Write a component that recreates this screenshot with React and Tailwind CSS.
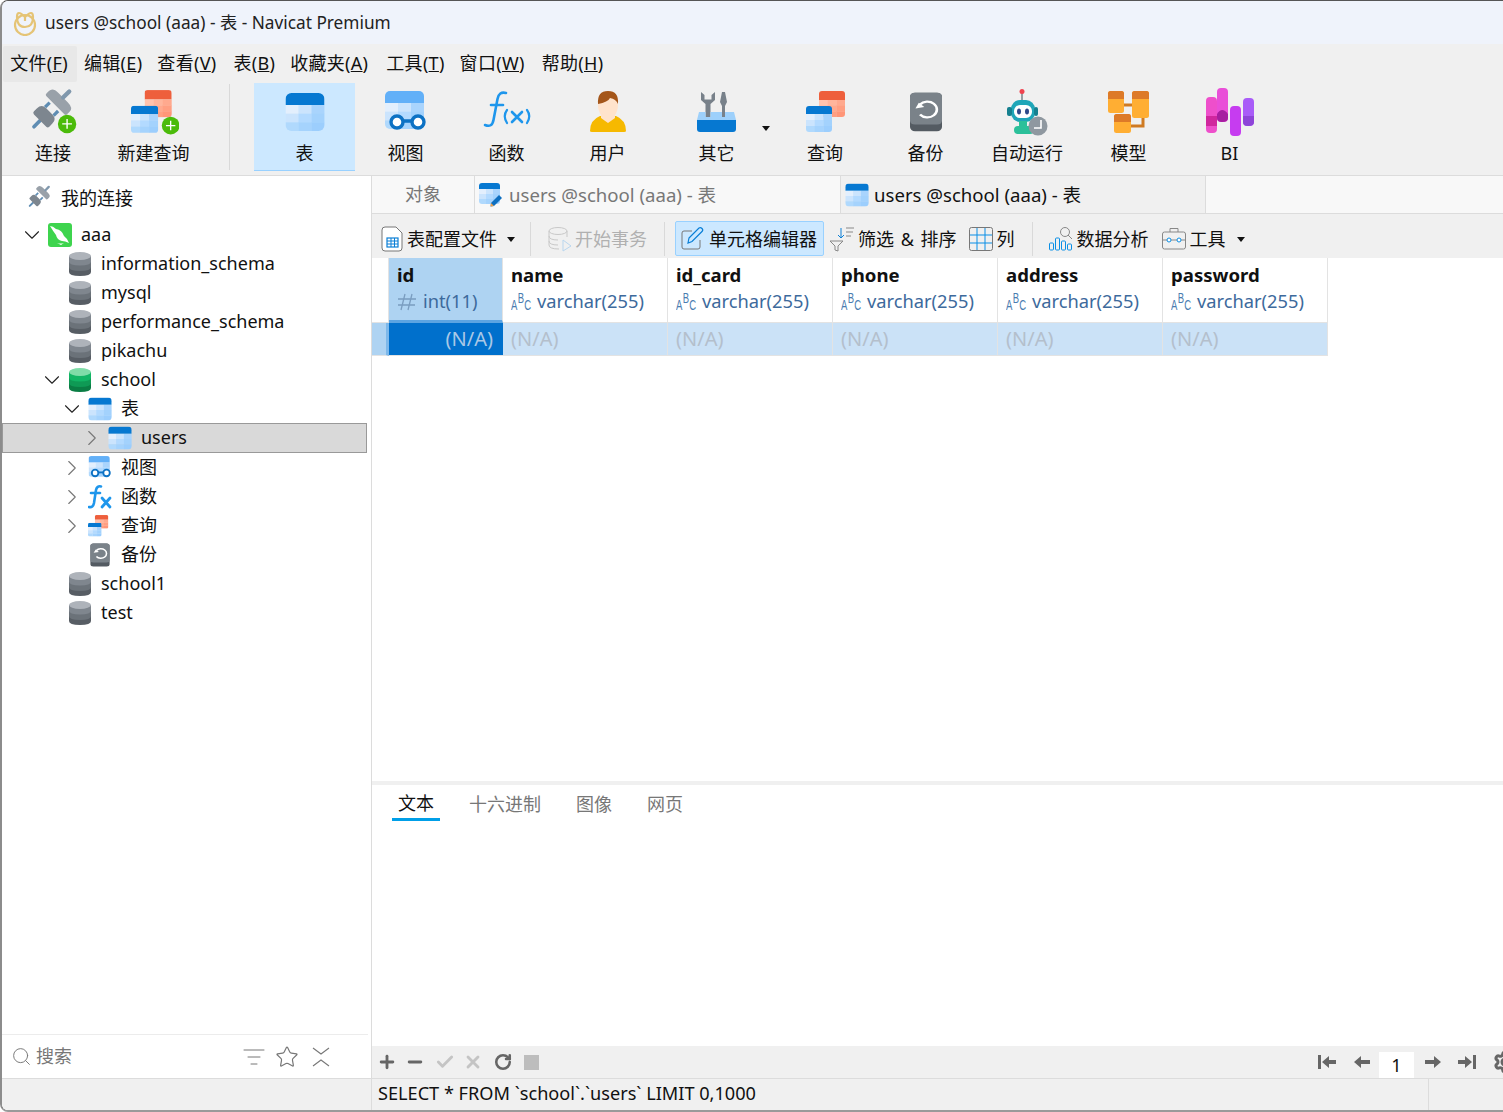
import { useId } from "react";
import { ChevronDown, ChevronRight, Search, Star, Plus, Minus, Check, X, RotateCw, Settings, ListFilter } from "lucide-react";

const font = "font-['Noto_Sans','Noto_Sans_CJK_SC',sans-serif]";

const BLUE_CELLS = ["#e3effd", "#cbe4fd", "#a9d4fd", "#cbe4fd", "#b3daff", "#a3d2fd", "#b0d9fd", "#a5d3fd", "#9ccefd"];
const RED_CELLS = ["#ffc3ae", "#ffb59c", "#ffa98e", "#ffb59c", "#ffa98e", "#ff9f82", "#ffa98e", "#ff9f82", "#ff9678"];

function Sheet({ x, y, w, h, head, headH, cells = BLUE_CELLS, rx = 4 }) {
  const id = useId();
  const bodyH = h - headH;
  return (
    <g>
      <clipPath id={id}><rect x={x} y={y} width={w} height={h} rx={rx} /></clipPath>
      <g clipPath={`url(#${id})`}>
        <rect x={x} y={y} width={w} height={headH} fill={head} />
        {cells.map((c, i) => (
          <rect key={i} x={x + (i % 3) * (w / 3)} y={y + headH + Math.floor(i / 3) * (bodyH / 3)} width={w / 3 + 0.3} height={bodyH / 3 + 0.3} fill={c} />
        ))}
      </g>
    </g>
  );
}

function TableIcon({ size = 40, className = "" }) {
  return (
    <svg width={size} height={size} viewBox="0 0 40 40" className={className}>
      <Sheet x={0.5} y={1} w={39} h={38} head="#0678d1" headH={12} rx={6} />
    </svg>
  );
}

function EditTableIcon() {
  return (
    <svg width="24" height="24" viewBox="0 0 24 24">
      <Sheet x={0} y={0} w={21} h={21} head="#0678d1" headH={6} rx={3} />
      <path d="M12 20 L20 12 L23 15 L15 23 L11.5 23.5 Z" fill="#0d6fc0" />
      <path d="M11.5 23.5 L12 20 L15 23 Z" fill="#f0a04b" />
    </svg>
  );
}

function ViewIcon({ size = 44 }) {
  return (
    <svg width={size} height={size} viewBox="0 0 44 44">
      <Sheet x={1} y={1} w={39} h={38} head="#62b0f8" headH={12} rx={5} />
      <circle cx="13" cy="32" r="6" fill="#fff" stroke="#0d72c4" strokeWidth="3.4" />
      <circle cx="34" cy="32" r="6" fill="#fff" stroke="#0d72c4" strokeWidth="3.4" />
      <path d="M19 31 H28" stroke="#0d72c4" strokeWidth="3.4" />
    </svg>
  );
}

function QueryIcon({ size = 40, plus = false, className = "" }) {
  return (
    <svg width={size} height={size} viewBox="0 0 46 44" className={className}>
      <Sheet x={13} y={1} w={26} h={26} head="#ee5f3c" headH={9} cells={RED_CELLS} rx={3} />
      <Sheet x={0} y={16} w={26} h={26} head="#0678d1" headH={8} rx={3} />
      {plus && <GreenPlus cx={38} cy={35} />}
    </svg>
  );
}

function GreenPlus({ cx, cy }) {
  return (
    <g>
      <circle cx={cx} cy={cy} r="8.5" fill="#4bbb0a" />
      <path d={`M${cx - 4.5} ${cy} H${cx + 4.5} M${cx} ${cy - 4.5} V${cy + 4.5}`} stroke="#fff" strokeWidth="1.3" />
    </g>
  );
}

function PlugIcon({ size = 48, plus = false }) {
  return (
    <svg width={size} height={size} viewBox="0 0 48 48">
      <g transform="rotate(-45 22 22)">
        <path d="M0 22 H8" stroke="#5f8db3" strokeWidth="3.4" strokeLinecap="round" />
        <path d="M8 14 Q8 12 10 12 H14 Q20 12 20 18 V26 Q20 32 14 32 H10 Q8 32 8 30 Z" fill="#7d868f" />
        <path d="M20 16.5 H26 M20 27.5 H26" stroke="#5f8db3" strokeWidth="3" />
        <path d="M28 10 Q28 8.5 30 8.5 H33 Q38 8.5 38 16 V28 Q38 35.5 33 35.5 H30 Q28 35.5 28 34 Z" fill="#99a1a9" />
        <path d="M38 22 H46" stroke="#8098ad" strokeWidth="4" strokeLinecap="round" />
      </g>
      {plus && <GreenPlus cx={37} cy={35} />}
    </svg>
  );
}

function FuncIcon() {
  return (
    <svg width="48" height="44" viewBox="0 0 48 44" fill="none" stroke="#1e96ec" strokeLinecap="round">
      <path d="M23 3 Q16 1 14.5 9 L10.5 30 Q9 38 2 35" strokeWidth="2.6" />
      <path d="M8 15 H20" strokeWidth="2.6" />
      <path d="M24 20 Q19.5 26 24 33 M44 20 Q48.5 26 44 33" strokeWidth="2.2" />
      <path d="M29 22 L39 32 M39 22 L29 32" strokeWidth="2.6" />
    </svg>
  );
}

function SmallFuncIcon() {
  return (
    <svg width="24" height="24" viewBox="0 0 24 24" fill="none" stroke="#1e96ec" strokeLinecap="round">
      <path d="M13 1.5 Q9 0.5 8 5 L6 18 Q5 23 1 22" strokeWidth="2.6" />
      <path d="M3 8 H12" strokeWidth="2.6" />
      <path d="M14 13 L22 22 M22 13 L14 22" strokeWidth="2.8" />
    </svg>
  );
}

function UserIcon() {
  return (
    <svg width="40" height="44" viewBox="0 0 40 44">
      <path d="M2 41 Q2 30 12 26 L28 26 Q38 30 38 41 Q38 42 36 42 H4 Q2 42 2 41Z" fill="#f6b900" />
      <path d="M13 22 H27 V28 L20 33 L13 28Z" fill="#ffe3cc" />
      <ellipse cx="20" cy="15" rx="10" ry="14" fill="#ffe3cc" />
      <path d="M10 14 Q9 1 20 1 Q31 1 30 14 Q28 9 22 8 Q20 12 10 14Z" fill="#a4561a" />
    </svg>
  );
}

function ToolsIcon() {
  return (
    <svg width="41" height="44" viewBox="0 0 41 44">
      <path d="M5 2 V10 L9.5 14 V30 H14.5 V14 L19 10 V2 L15.5 5 V9.5 H8.5 V5Z" fill="#78818a" />
      <path d="M26 2 H29 L31 12 L29 16 V30 H26 V16 L24 12Z" fill="#78818a" />
      <path d="M3 22 H9.5 V27 H14.5 V22 H26 V27 H29 V22 H38 L40 30 H1Z" fill="#9dd0fb" />
      <path d="M1 30 H40 V39 Q40 42 37 42 H4 Q1 42 1 39Z" fill="#0678d1" />
    </svg>
  );
}

function BackupIcon({ size = 40 }) {
  return (
    <svg width={size} height={size} viewBox="0 0 40 48" preserveAspectRatio="none">
      <rect x="4" y="1" width="32" height="46" rx="5" fill="#545b62" />
      <path d="M4 6 Q4 1 9 1 H31 Q36 1 36 6 V34 Q36 39 31 39 H9 Q4 39 4 34Z" fill="#7a8289" />
      <path d="M14 15 A9.5 9.5 0 1 1 14 27" fill="none" stroke="#fff" strokeWidth="2.6" />
      <path d="M9 19 H18 L13.5 13Z" transform="rotate(-10 13 17)" fill="#fff" />
    </svg>
  );
}

function RobotIcon() {
  return (
    <svg width="44" height="48" viewBox="0 0 44 48">
      <path d="M17 5 V12" stroke="#7f8990" strokeWidth="1.6" />
      <circle cx="17" cy="3.5" r="2.5" fill="#f0434f" />
      <rect x="6" y="12" width="24" height="22" rx="9" fill="#1fa6b8" />
      <rect x="2" y="19" width="5" height="9" rx="2" fill="#15808f" />
      <rect x="29" y="19" width="4" height="9" rx="2" fill="#15808f" />
      <rect x="9" y="17" width="18" height="13" rx="6" fill="#fff" />
      <ellipse cx="14" cy="23.5" rx="2" ry="3" fill="#2e4a8a" />
      <ellipse cx="22" cy="23.5" rx="2" ry="3" fill="#2e4a8a" />
      <rect x="14" y="33" width="8" height="5" fill="#2cc09a" />
      <rect x="9" y="38" width="20" height="8" rx="4" fill="#2cc09a" />
      <ellipse cx="33" cy="38" rx="9.5" ry="9.5" fill="#8f98a0" />
      <path d="M36 32 V40 H29" fill="none" stroke="#fff" strokeWidth="1.6" />
    </svg>
  );
}

function ModelIcon() {
  return (
    <svg width="44" height="44" viewBox="0 0 44 44">
      <path d="M14 15 H28 M36 28 V36 H24" fill="none" stroke="#cf7a22" strokeWidth="3" />
      {[[1, 1, 16, 22], [25, 1, 17, 27], [7, 24, 17, 19]].map(([x, y, w, h]) => (
        <g key={x}>
          <rect x={x} y={y} width={w} height={h} rx="2.5" fill="#ffae33" />
          <path d={`M${x} ${y + 8} V${y + 2.5} Q${x} ${y} ${x + 2.5} ${y} H${x + w - 2.5} Q${x + w} ${y} ${x + w} ${y + 2.5} V${y + 8}Z`} fill="#dd7a28" />
        </g>
      ))}
    </svg>
  );
}

function BiIcon() {
  return (
    <svg width="48" height="48" viewBox="0 0 48 48">
      <rect x="0" y="12" width="11" height="36" rx="4" transform="translate(0 -3)" fill="#ee4fcb" />
      <rect x="0" y="28" width="11" height="10" fill="#d0279e" />
      <rect x="11" y="0" width="11" height="34" rx="4" fill="#e94fd8" />
      <path d="M11 26 Q16 18 22 26 V30 Q22 34 16 34 Q11 34 11 30Z" fill="#a61ea0" />
      <rect x="24" y="18" width="11" height="30" rx="4" fill="#c63cf0" />
      <rect x="37" y="10" width="11" height="28" rx="4" fill="#a95cf8" />
      <path d="M37 28 H48 V34 Q48 38 42 38 Q37 38 37 34Z" fill="#8e45d8" />
    </svg>
  );
}

function DbIcon({ green = false }) {
  const c = green
    ? ["#7fdca8", "#12b565", "#0f9a55", "#0a7d44"]
    : ["#aeb3ba", "#7f868e", "#6b7279", "#575d64"];
  return (
    <svg width="22" height="24" viewBox="0 0 22 24">
      <path d="M0 4 V20 Q0 24 11 24 Q22 24 22 20 V4Z" fill={c[3]} />
      <path d="M0 4 V15 Q0 19 11 19 Q22 19 22 15 V4Z" fill={c[2]} />
      <path d="M0 4 V9.5 Q0 13.5 11 13.5 Q22 13.5 22 9.5 V4Z" fill={c[1]} />
      <ellipse cx="11" cy="4" rx="11" ry="4" fill={c[0]} />
    </svg>
  );
}

function ConnIcon() {
  return (
    <svg width="24" height="24" viewBox="0 0 24 24">
      <rect width="24" height="24" rx="3" fill="#3ed44e" />
      <path d="M2 3 Q5 3 8 6 Q14 7 16 13 Q19 15 21 20 Q17 18 14 18 Q9 17 8 12 Q5 8 2 3Z" fill="#fff" />
      <path d="M9 20 Q13 21 16 20 L13 22Z" fill="#fff" />
    </svg>
  );
}

function TypeAbc() {
  return (
    <svg width="22" height="26" viewBox="0 0 22 26" fill="#4a7cb0" className="shrink-0" fontFamily="Liberation Sans" fontSize="14">
      <g transform="scale(0.68 1)">
        <text x="0" y="22">A</text>
        <text x="10" y="15">B</text>
        <text x="19.5" y="22">C</text>
      </g>
    </svg>
  );
}

function ToolbarItem({ label, icon, active = false, w = "w-[101px]" }) {
  return (
    <div className={`${w} h-[88px] flex flex-col items-center shrink-0 ${active ? "bg-[#cce8ff] border-b border-[#99d1ff]" : ""}`}>
      <div className="h-[54px] mt-[2px] flex items-center justify-center">{icon}</div>
      <div className="text-[18px] leading-[24px] mt-[2px] text-[#111]">{label}</div>
    </div>
  );
}

function Sep({ className = "" }) {
  return <div className={`w-px bg-[#d9d9d9] shrink-0 ${className}`} />;
}

const rowIndent = { 0: "pl-[20px]", 1: "pl-[40px]", 2: "pl-[60px]", 3: "pl-[80px]" };

function TreeRow({ depth, arrow, icon, label, selected }) {
  return (
    <div className={`flex items-center ${rowIndent[depth]} ${selected ? "h-[30px] pb-px bg-[#d9d9d9] outline outline-1 -outline-offset-1 outline-[#999] mr-[4px]" : "h-[29px]"}`}>
      <div className="w-[20px] flex justify-center shrink-0">
        {arrow === "down" && <ChevronDown size={26} strokeWidth={1} color="#222" className="shrink-0" />}
        {arrow === "right" && <ChevronRight size={26} strokeWidth={1} color="#777" className="shrink-0" />}
      </div>
      <div className="w-[24px] ml-[6px] flex justify-center shrink-0">{icon}</div>
      <div className="ml-[9px] text-[18px] text-[#111] whitespace-nowrap">{label}</div>
    </div>
  );
}

const columns = [
  { name: "id", type: "int(11)" },
  { name: "name", type: "varchar(255)" },
  { name: "id_card", type: "varchar(255)" },
  { name: "phone", type: "varchar(255)" },
  { name: "address", type: "varchar(255)" },
  { name: "password", type: "varchar(255)" },
];

function NavIcon({ kind }) {
  const paths = {
    first: "M0 1 H3 V15 H0Z M18 6 H11 V2 L4 8 L11 14 V10 H18Z",
    prev: "M17 6 H8 V2 L1 8 L8 14 V10 H17Z",
    next: "M1 6 H10 V2 L17 8 L10 14 V10 H1Z",
    last: "M15 1 H18 V15 H15Z M0 6 H7 V2 L14 8 L7 14 V10 H0Z",
  };
  return (
    <svg width="18" height="16" viewBox="0 0 18 16" fill="#666">
      <path d={paths[kind]} />
    </svg>
  );
}

export default function App() {
  return (
    <div className={`${font} w-[1503px] h-[1112px] overflow-hidden bg-white flex flex-col`}>
      <div className="h-[1112px] flex flex-col border-l-2 border-[#8c8c8c] border-b-2 border-b-[#9a9a9a] border-t border-t-[#555] rounded-bl-[8px] rounded-tl-[8px] overflow-hidden">
        {/* title bar */}
        <div className="h-[43px] bg-[#eff3fb] flex items-center shrink-0 pl-[11px]">
          <svg width="24" height="26" viewBox="0 0 24 26" fill="none" stroke="#e5c476" strokeWidth="2.2">
            <circle cx="12" cy="15" r="10" />
            <path d="M12 7 Q4 -1 4 7 Q4 17 12 17 Q20 17 20 7 Q20 -1 12 7" />
            <path d="M12 7 V11" />
          </svg>
          <span className="ml-[8px] text-[17.25px] text-[#222]">users @school (aaa) - 表 - Navicat Premium</span>
        </div>

        {/* menu */}
        <div className="h-[39px] bg-[#f0f0f0] flex items-center shrink-0 text-[18px] text-[#111] tracking-[0.3px]">
          <div className="bg-[#e8e8e8] rounded-[2px] h-[36px] w-[74px] flex items-center justify-center ml-px pr-[2px]">
            <span>文件(<u>F</u>)</span>
          </div>
          <span className="ml-[7px]">编辑(<u>E</u>)</span>
          <span className="ml-[15px]">查看(<u>V</u>)</span>
          <span className="ml-[17px]">表(<u>B</u>)</span>
          <span className="ml-[15px]">收藏夹(<u>A</u>)</span>
          <span className="ml-[18px]">工具(<u>T</u>)</span>
          <span className="ml-[15px]">窗口(<u>W</u>)</span>
          <span className="ml-[17px]">帮助(<u>H</u>)</span>
        </div>

        {/* main toolbar */}
        <div className="h-[93px] bg-[#f0f0f0] border-b border-[#dcdcdc] flex shrink-0 items-start">
          <div className="ml-px flex">
            <ToolbarItem label="连接" icon={<PlugIcon size={52} plus />} w="w-[100px]" />
            <ToolbarItem label="新建查询" icon={<QueryIcon size={48} plus className="ml-[2px]" />} />
          </div>
          <Sep className="ml-[25px] mt-[1px] h-[86px]" />
          <div className="ml-[24px] flex">
            <ToolbarItem active label="表" icon={<TableIcon />} />
            <ToolbarItem label="视图" icon={<ViewIcon />} />
            <ToolbarItem label="函数" icon={<FuncIcon />} />
            <ToolbarItem label="用户" icon={<UserIcon />} />
            <div className="relative w-[117px] flex justify-center">
              <ToolbarItem label="其它" icon={<ToolsIcon />} />
              <div className="absolute left-[104px] top-[43px] w-0 h-0 border-x-[4px] border-x-transparent border-t-[5px] border-t-[#111]" />
            </div>
            <ToolbarItem label="查询" icon={<QueryIcon size={46} className="ml-[8px]" />} w="w-[100px]" />
            <ToolbarItem label="备份" icon={<BackupIcon size={40} />} />
            <ToolbarItem label="自动运行" icon={<RobotIcon />} w="w-[102px]" />
            <ToolbarItem label="模型" icon={<ModelIcon />} />
            <ToolbarItem label="BI" icon={<BiIcon />} />
          </div>
        </div>

        <div className="flex-1 flex min-h-0">
          {/* sidebar */}
          <div className="w-[370px] shrink-0 flex flex-col border-r border-[#dcdcdc] bg-white">
            <div className="flex-1 pt-[7px]">
              <div className="h-[30px] flex items-center pl-[24px]">
                <PlugIcon size={28} />
                <span className="ml-[7px] text-[18px] text-[#111]">我的连接</span>
              </div>
              <div className="mt-[7px]">
                <TreeRow depth={0} arrow="down" icon={<ConnIcon />} label="aaa" />
                <TreeRow depth={1} icon={<DbIcon />} label="information_schema" />
                <TreeRow depth={1} icon={<DbIcon />} label="mysql" />
                <TreeRow depth={1} icon={<DbIcon />} label="performance_schema" />
                <TreeRow depth={1} icon={<DbIcon />} label="pikachu" />
                <TreeRow depth={1} arrow="down" icon={<DbIcon green />} label="school" />
                <TreeRow depth={2} arrow="down" icon={<TableIcon size={24} />} label="表" />
                <TreeRow depth={3} arrow="right" selected icon={<TableIcon size={24} />} label="users" />
                <TreeRow depth={2} arrow="right" icon={<ViewIcon size={25} />} label="视图" />
                <TreeRow depth={2} arrow="right" icon={<SmallFuncIcon />} label="函数" />
                <TreeRow depth={2} arrow="right" icon={<QueryIcon size={24} />} label="查询" />
                <TreeRow depth={2} icon={<BackupIcon size={24} />} label="备份" />
                <TreeRow depth={1} icon={<DbIcon />} label="school1" />
                <TreeRow depth={1} icon={<DbIcon />} label="test" />
              </div>
            </div>
            <div className="h-[44px] mr-[3px] border-t border-[#ececec] flex items-center pl-[9px] text-[#777] shrink-0">
              <Search size={21} strokeWidth={1.1} />
              <span className="ml-[4px] text-[18px]">搜索</span>
              <ListFilter size={24} strokeWidth={1} className="ml-[170px]" />
              <Star size={24} strokeWidth={1.2} className="ml-[9px]" />
              <svg width="20" height="20" viewBox="0 0 20 20" fill="none" stroke="#777" strokeWidth="1.1" className="ml-[12px]">
                <path d="M2 1 L10 7 L18 1 M2 19 L10 13 L18 19" />
              </svg>
            </div>
            <div className="h-[32px] bg-[#f0f0f0] border-t border-[#dcdcdc] shrink-0" />
          </div>

          {/* content */}
          <div className="flex-1 min-w-0 flex flex-col">
            <div className="h-[38px] bg-[#f8f8f8] border-b border-[#dcdcdc] flex shrink-0 text-[18.6px]">
              <div className="w-[103px] flex items-center justify-center text-[18px] text-[#777] border-r border-[#dcdcdc]">对象</div>
              <div className="w-[366px] flex items-center pl-[4px] text-[#777] border-r border-[#dcdcdc]">
                <EditTableIcon />
                <span className="ml-[6px]">users @school (aaa) - 表</span>
              </div>
              <div className="w-[365px] flex items-center pl-[4px] bg-[#f0f0f0] text-[#111] border-r border-[#dcdcdc]">
                <TableIcon size={24} />
                <span className="ml-[5px]">users @school (aaa) - 表</span>
              </div>
            </div>

            {/* table toolbar */}
            <div className="h-[44px] pt-[6px] bg-[#f0f0f0] flex items-center shrink-0 text-[18px] text-[#111]">
              <svg width="22" height="26" viewBox="0 0 22 26" fill="none" className="ml-[9px]">
                <path d="M1 4 Q1 1 4 1 H15 L21 7 V22 Q21 25 18 25 H4 Q1 25 1 22Z" fill="#fff" stroke="#777" />
                <rect x="6" y="12" width="11" height="9" fill="#fff" stroke="#0a7fd6" strokeWidth="1.2" />
                <path d="M6 15 H17 M6 18 H17 M10 12 V21 M13.5 12 V21" stroke="#0a7fd6" />
              </svg>
              <span className="ml-[4px]">表配置文件</span>
              <div className="ml-[10px] w-0 h-0 border-x-[4px] border-x-transparent border-t-[5px] border-t-[#111]" />
              <Sep className="ml-[15px] h-[34px]" />
              <svg width="24" height="26" viewBox="0 0 24 26" fill="none" stroke="#c8c8c8" className="ml-[17px]">
                <ellipse cx="10" cy="5" rx="9" ry="3.5" />
                <path d="M1 5 V19 Q1 23 11 23 M19 5 V11 M1 10 Q1 14 10 14 M1 15 Q1 19 10 19" />
                <path d="M15 14 L23 20 L15 25Z" stroke="#b9d6ee" />
              </svg>
              <span className="ml-[3px] text-[#b0b0b0]">开始事务</span>
              <Sep className="ml-[17px] h-[34px]" />
              <div className="ml-[10px] -mt-[2px] w-[149px] h-[35px] bg-[#cce8ff] border border-[#99d1ff] rounded-[2px] flex items-center pl-[5px]">
                <svg width="24" height="24" viewBox="0 0 24 24" fill="none">
                  <path d="M11 5 H3 Q1 5 1 7 V21 Q1 23 3 23 H17 Q19 23 19 21 V14" stroke="#777" />
                  <path d="M8 12 L18 2 Q19.5 1 21 2.5 Q22.5 4 21 5.5 L11 15.5 L7 17Z" stroke="#0a7fd6" strokeWidth="1.2" />
                </svg>
                <span className="ml-[4px] pt-[2px]">单元格编辑器</span>
              </div>
              <svg width="26" height="26" viewBox="0 0 26 26" fill="none" className="ml-[5px]">
                <path d="M1 15 H14 L9 20 V25 L6 24 V20Z" stroke="#888" />
                <path d="M12 2 V12 M9 9 L12 12 L15 9" stroke="#0a7fd6" />
                <path d="M17 2 H25 M17 6 H24 M17 10 H22" stroke="#888" />
              </svg>
              <span className="ml-[3px] [word-spacing:2px]">筛选 &amp; 排序</span>
              <svg width="24" height="24" viewBox="0 0 24 24" fill="none" className="ml-[12px]">
                <rect x="0.5" y="0.5" width="23" height="23" rx="2" stroke="#777" />
                <path d="M8 1 V23 M16 1 V23 M1 8 H23 M1 16 H23" stroke="#0a8fe6" />
              </svg>
              <span className="ml-[4px]">列</span>
              <Sep className="ml-[17px] h-[34px]" />
              <svg width="24" height="26" viewBox="0 0 24 26" fill="none" stroke="#0a8fe6" className="ml-[16px]">
                <rect x="0.5" y="17" width="4" height="7" rx="1" />
                <rect x="6.5" y="12" width="4" height="12" rx="1" />
                <rect x="12.5" y="15" width="4" height="9" rx="1" />
                <rect x="18.5" y="18" width="4" height="6" rx="1" />
                <circle cx="16" cy="6" r="4.5" stroke="#888" />
                <path d="M19 9 L23 13" stroke="#888" />
              </svg>
              <span className="ml-[4px]">数据分析</span>
              <svg width="24" height="24" viewBox="0 0 24 24" fill="none" className="ml-[13px]">
                <rect x="0.5" y="5" width="23" height="17" rx="2" stroke="#888" />
                <path d="M8 5 V1.5 H16 V5" stroke="#888" />
                <path d="M1 13 H23" stroke="#888" />
                <circle cx="7" cy="13" r="2" fill="#fff" stroke="#0a8fe6" />
                <circle cx="17" cy="13" r="2" fill="#fff" stroke="#0a8fe6" />
              </svg>
              <span className="ml-[4px]">工具</span>
              <div className="ml-[11px] w-0 h-0 border-x-[4px] border-x-transparent border-t-[5px] border-t-[#111]" />
            </div>

            {/* grid */}
            <div className="flex-1 bg-white min-h-0 flex flex-col">
              <div className="grid grid-cols-[17px_114px_165px_165px_165px_165px_165px] w-[956px]">
                <div className="h-[65px] border-r border-[#e3e3e3] border-b" />
                {columns.map((c, i) => (
                  <div key={c.name} className={`h-[65px] pl-[8px] border-r border-b border-[#e3e3e3] ${i === 0 ? "bg-[#aed3f2] border-b-[3px] border-b-[#5ba4e2]" : ""}`}>
                    <div className="text-[18.6px] leading-[24px] mt-[5px] font-bold text-[#111]">{c.name}</div>
                    <div className="flex items-center h-[26px] mt-[1px] text-[18.3px] text-[#3d6a9c]">
                      {i === 0 ? (
                        <svg width="20" height="20" viewBox="0 0 20 20" fill="none" stroke="#7a9dc0" strokeWidth="1.3" className="shrink-0">
                          <path d="M8 3 L4 19 M15 3 L11 19 M1 8 H19 M1 14 H18" />
                        </svg>
                      ) : <TypeAbc />}
                      <span className={i === 0 ? "ml-[6px]" : "ml-[4px]"}>{c.type}</span>
                    </div>
                  </div>
                ))}
                <div className="h-[33px] bg-[#aed3f2] border-r-[3px] border-[#7db8ea] border-b border-b-[#e3e3e3]" />
                {columns.map((c, i) => (
                  <div key={c.name} className={`h-[33px] flex items-center text-[20px] border-b border-[#e3e3e3] ${i === 0 ? "bg-[#0070cc] text-[#a9c8e6] justify-end pr-[10px]" : "bg-[#cbe2f7] text-[#b4bfcc] pl-[8px] border-r border-r-[#e3e3e3]"}`}>
                    (N/A)
                  </div>
                ))}
              </div>
            </div>

            {/* cell editor */}
            <div className="h-[265px] border-t-4 border-[#f0f0f0] shrink-0 bg-white">
              <div className="flex text-[18px] text-[#777] pl-[20px] h-[36px]">
                <div className="w-[48px] flex justify-center items-center h-[36px] pt-[4px] border-b-[3px] border-[#009fe8] text-[#111]">文本</div>
                <span className="ml-[29px] mt-[6px]">十六进制</span>
                <span className="ml-[35px] mt-[6px]">图像</span>
                <span className="ml-[35px] mt-[6px]">网页</span>
              </div>
            </div>

            {/* grid nav */}
            <div className="h-[32px] bg-[#f0f0f0] flex items-center shrink-0 overflow-hidden [&>*]:shrink-0">
              <Plus size={20} strokeWidth={3.4} color="#666" className="ml-[5px]" />
              <Minus size={20} strokeWidth={3.4} color="#666" className="ml-[8px]" />
              <Check size={20} strokeWidth={3.4} color="#c4c4c4" className="ml-[10px]" />
              <X size={20} strokeWidth={3.4} color="#c4c4c4" className="ml-[8px]" />
              <RotateCw size={18} strokeWidth={3.4} color="#666" className="ml-[11px]" />
              <div className="ml-[12px] w-[15px] h-[15px] bg-[#bdbdbd]" />
              <div className="ml-[779px]"><NavIcon kind="first" /></div>
              <div className="ml-[17px]"><NavIcon kind="prev" /></div>
              <div className="ml-[8px] w-[35px] h-[26px] mt-[6px] bg-white text-center text-[18px] leading-[26px] text-[#111]">1</div>
              <div className="ml-[10px]"><NavIcon kind="next" /></div>
              <div className="ml-[16px]"><NavIcon kind="last" /></div>
              <Settings size={24} strokeWidth={3} color="#666" className="ml-[17px]" />
            </div>
            <div className="h-[32px] bg-[#f0f0f0] border-t border-[#dcdcdc] flex shrink-0">
              <div className="w-[1057px] pl-[6px] text-[18.15px] leading-[28px] text-[#111] border-r border-[#dcdcdc] whitespace-nowrap">
                {"SELECT * FROM `school`.`users` LIMIT 0,1000"}
              </div>
            </div>
          </div>
        </div>
      </div>
    </div>
  );
}
